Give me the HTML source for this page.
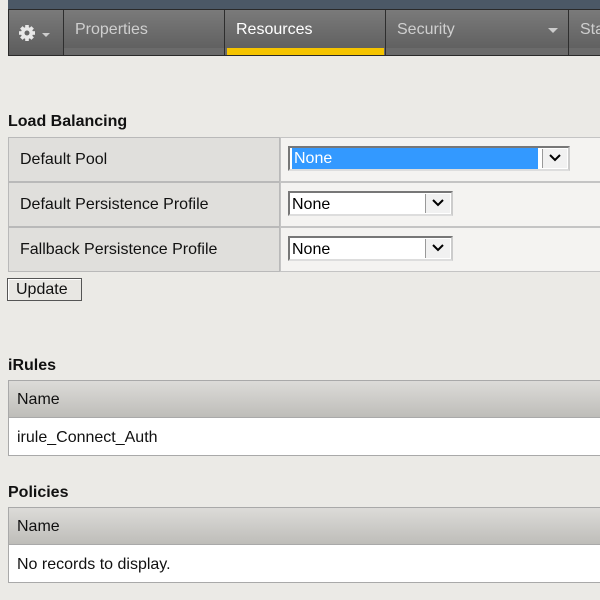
<!DOCTYPE html>
<html><head><style>
body{margin:0;width:600px;height:600px;overflow:hidden;background:#ebeae6;font-family:"Liberation Sans",Arial,sans-serif;position:relative}
.a{position:absolute;box-sizing:border-box}
.top{left:8px;top:0;width:592px;height:10px;background:#4b5866}
.bar{left:8px;top:9px;width:600px;height:47px;background:linear-gradient(#7a7a7a,#5c5c5c);border:1px solid #2a2a2a}
.tab{top:10px;height:45px;border-left:1px solid #2e2e2e;color:#cfcfcf;font-size:16px;padding:11px 0 0 11px}
.tab:after{content:"";position:absolute;left:0;right:0;bottom:0;height:7px;background:#6b6b6b}
.h{font-weight:bold;font-size:16px;color:#111;left:8px}
.lbl{left:8px;width:272px;height:45px;background:#e0dfdc;border:1px solid #b9b9b9;font-size:16px;padding:13px 0 0 11px;color:#111}
.val{left:280px;width:330px;height:45px;background:#f4f3f1;border:1px solid #c4c4c4}
.sel{height:25px;background:#fff;border:2px solid #777;border-right-color:#ccc;border-bottom-color:#ddd;font-size:16px;padding:3px 0 0 2px}
.arr{position:absolute;right:1px;top:1px;width:24px;height:19px;background:#f1f1f1;border-left:1px solid #999}
.arr svg{position:absolute;left:6px;top:5px}
.th{left:8px;width:600px;height:38px;background:linear-gradient(#dcdbd8,#bebdb9);border:1px solid #a9a9a9;font-size:16px;padding:10px 0 0 8px;color:#111}
.td{left:8px;width:600px;height:38px;background:#fff;border:1px solid #a9a9a9;border-top:none;font-size:16px;padding:11px 0 0 8px;color:#111}
</style></head><body>
<div class="a top"></div>
<div class="a bar"></div>
<div class="a" style="left:18px;top:23px;width:40px;height:20px">
<svg width="40" height="20"><g transform="translate(9,10)" fill="#e8e8e8"><circle r="6"/><rect x="-1.8" y="-8" width="3.6" height="16"/><rect x="-8" y="-1.8" width="16" height="3.6"/><rect x="-1.8" y="-8" width="3.6" height="16" transform="rotate(45)"/><rect x="-1.8" y="-8" width="3.6" height="16" transform="rotate(-45)"/><circle r="2.5" fill="#666"/></g><path d="M24 10h8l-4 4z" fill="#ccc"/></svg></div>
<div class="a tab" style="left:63px;width:161px">Properties</div>
<div class="a tab" style="left:224px;width:161px;color:#fff">Resources</div>
<div class="a" style="left:227px;top:48px;width:157px;height:7px;background:#f5c400"></div>
<div class="a tab" style="left:385px;width:183px">Security<svg style="position:absolute;right:10px;top:18px" width="10" height="6"><path d="M0 0h10l-5 5z" fill="#ccc"/></svg></div>
<div class="a tab" style="left:568px;width:40px">Sta</div>

<div class="a h" style="top:113px">Load Balancing</div>
<div class="a lbl" style="top:137px">Default Pool</div>
<div class="a val" style="top:137px"></div>
<div class="a lbl" style="top:182px">Default Persistence Profile</div>
<div class="a val" style="top:182px"></div>
<div class="a lbl" style="top:227px">Fallback Persistence Profile</div>
<div class="a val" style="top:227px"></div>
<div class="a sel" style="left:288px;top:146px;width:282px;padding-top:0"><div style="background:#3399ff;color:#fff;width:246px;height:21px;padding:2px 0 0 2px;box-sizing:border-box">None</div><div class="arr"><svg width="12" height="8"><path d="M1 1l5 5 5-5" stroke="#000" stroke-width="2" fill="none"/></svg></div></div>
<div class="a sel" style="left:288px;top:191px;width:165px">None<div class="arr"><svg width="12" height="8"><path d="M1 1l5 5 5-5" stroke="#000" stroke-width="2" fill="none"/></svg></div></div>
<div class="a sel" style="left:288px;top:236px;width:165px">None<div class="arr"><svg width="12" height="8"><path d="M1 1l5 5 5-5" stroke="#000" stroke-width="2" fill="none"/></svg></div></div>
<div class="a" style="left:7px;top:278px;width:75px;height:23px;background:#e8e7e3;border:1px solid #555;box-shadow:inset 1px 1px #fff;font-size:16px;padding:2px 0 0 8px;color:#111">Update</div>

<div class="a h" style="top:357px">iRules</div>
<div class="a th" style="top:380px">Name</div>
<div class="a td" style="top:418px">irule_Connect_Auth</div>
<div class="a h" style="top:484px">Policies</div>
<div class="a th" style="top:507px">Name</div>
<div class="a td" style="top:545px">No records to display.</div>
</body></html>
